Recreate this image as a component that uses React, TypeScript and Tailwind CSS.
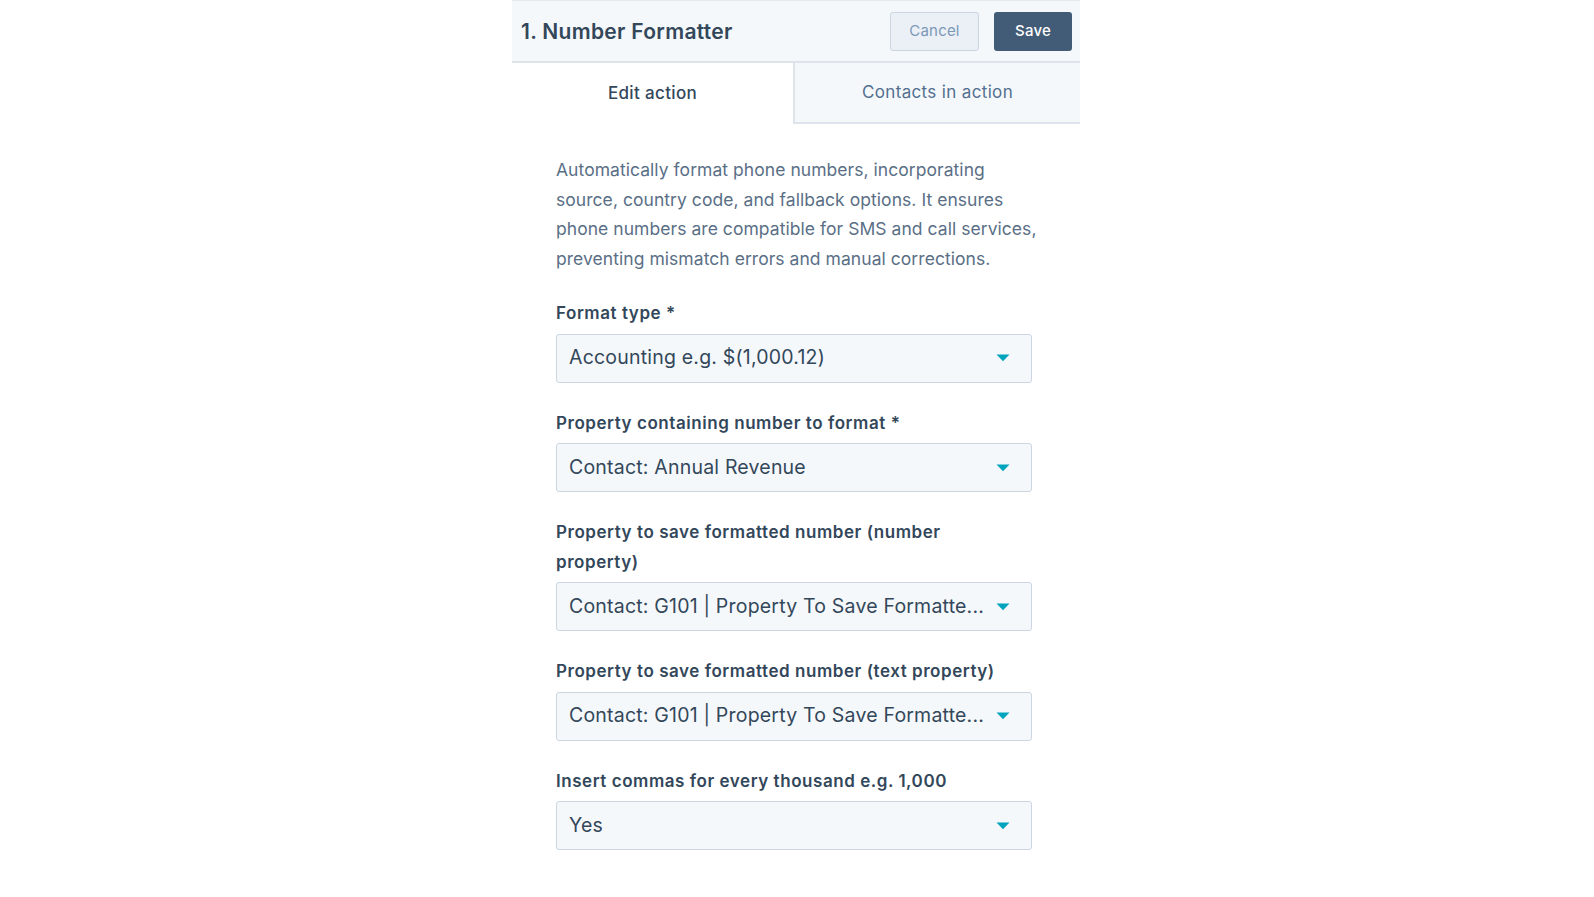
import React from "react";

const fields: { label: React.ReactNode; value: string }[] = [
  { label: "Format type *", value: "Accounting e.g. $(1,000.12)" },
  { label: "Property containing number to format *", value: "Contact: Annual Revenue" },
  {
    label: (
      <>
        Property to save formatted number (number
        <br />
        property)
      </>
    ),
    value: "Contact: G101 | Property To Save Formatte...",
  },
  { label: "Property to save formatted number (text property)", value: "Contact: G101 | Property To Save Formatte..." },
  { label: "Insert commas for every thousand e.g. 1,000", value: "Yes" },
];

function Caret() {
  return (
    <svg width="14" height="8" viewBox="0 0 14 8" className="shrink-0">
      <path d="M0.5 0.5 L13.5 0.5 L7 7.2 Z" fill="#00a4bd" />
    </svg>
  );
}

export default function App() {
  return (
    <div
      className="min-h-[897px] w-full bg-white flex justify-center"
      style={{ fontFamily: "Inter, 'Noto Sans', sans-serif" }}
    >
      <div className="w-[568px] ml-[-2px] flex flex-col">
        <div className="h-[63px] bg-[#f5f8fa] border-t border-[#e5eaf0] border-b-2 border-b-[#dfe3eb] flex items-center pl-[9px] pr-[8px] pt-[1px]">
          <div className="flex-1 text-[21px] font-semibold text-[#33475b] tracking-[0.3px]">1. Number Formatter</div>
          <button className="h-[39px] w-[89px] rounded-[3px] bg-[#eaf0f6] border border-[#cbd6e2] text-[15px] tracking-[0.2px] text-[#7c98b6]">
            Cancel
          </button>
          <button className="ml-[15px] h-[39px] w-[78px] rounded-[3px] bg-[#425b76] text-[15px] tracking-[0.2px] font-medium text-white">
            Save
          </button>
        </div>
        <div className="flex h-[61px]">
          <div className="w-[281px] flex items-center justify-center text-[17px] tracking-[0.35px] font-medium text-[#33475b]">
            Edit action
          </div>
          <div className="flex-1 flex items-center justify-center bg-[#f5f8fa] border-l-2 border-b-2 border-[#dfe3eb] text-[17px] tracking-[0.35px] text-[#516f90]">
            Contacts in action
          </div>
        </div>
        <div className="pl-[44px] pr-[48px] pt-[31px]">
          <p className="text-[17.5px] leading-[29.5px] text-[#5a6f86] tracking-[0.05px] whitespace-nowrap">
            Automatically format phone numbers, incorporating
            <br />
            source, country code, and fallback options. It ensures
            <br />
            phone numbers are compatible for SMS and call services,
            <br />
            preventing mismatch errors and manual corrections.
          </p>
          <div className="mt-[26px] flex flex-col gap-[26px]">
            {fields.map((f, i) => (
              <div key={i}>
                <div className="text-[17px] leading-[29.5px] font-semibold text-[#33475b] tracking-[0.55px] whitespace-nowrap">
                  {f.label}
                </div>
                <div className="mt-[5px] h-[49px] bg-[#f5f8fa] border border-[#cbd6e2] rounded-[3px] flex items-center pl-[12px] pr-[21px] gap-[8px]">
                  <span className="flex-1 whitespace-nowrap overflow-hidden text-[19.5px] tracking-[0.2px] text-[#33475b]">
                    {f.value}
                  </span>
                  <Caret />
                </div>
              </div>
            ))}
          </div>
        </div>
      </div>
    </div>
  );
}
